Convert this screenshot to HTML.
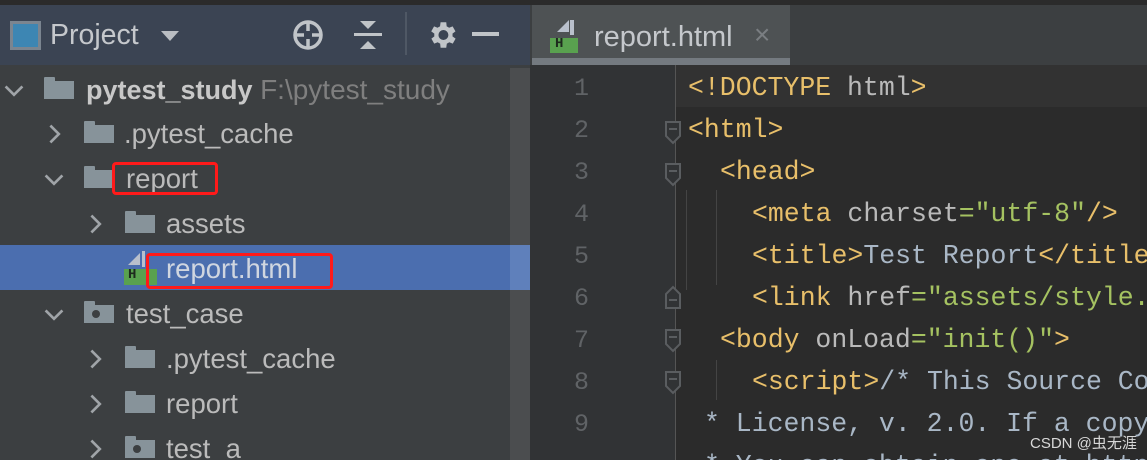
<!DOCTYPE html>
<html><head><style>
*{margin:0;padding:0;box-sizing:border-box}
html,body{width:1147px;height:460px;overflow:hidden}
body{background:#2b2b2b;position:relative;font-family:"Liberation Sans","Noto Sans CJK SC",sans-serif}
.a{position:absolute}
#top{left:0;top:0;width:1147px;height:5px;background:#2b2b2b}
#lhead{left:0;top:5px;width:530px;height:60px;background:#3b4453}
#tree{left:0;top:65px;width:530px;height:395px;background:#3c3f41}
#sb{left:510px;top:68px;width:20px;height:392px;background:#4b4d4f}
.t{position:absolute;font-size:27.5px;color:#bbbbbb;white-space:nowrap;line-height:30px}
.fold{position:absolute;width:30px;height:22px}
.fold:before{content:"";position:absolute;left:0;top:0;width:11px;height:5px;background:#87939a;border-radius:1px 1px 0 0}
.fold:after{content:"";position:absolute;left:0;top:4px;width:30px;height:18px;background:#87939a}
.dot{position:absolute;width:8px;height:8px;border-radius:50%;background:#3c3f41;z-index:2}
.ch{position:absolute}
#tabs{left:530px;top:5px;width:617px;height:60px;background:#3c3f41}
#tab{left:532px;top:5px;width:258px;height:53px;background:#4e5254}
#tabul{left:532px;top:58px;width:258px;height:7px;background:#747a80}
#gut{left:530px;top:65px;width:145px;height:395px;background:#313335}
#gl{left:675px;top:65px;width:1px;height:395px;background:#555}
#hl{left:676px;top:65px;width:471px;height:42px;background:#323232}
.ln{position:absolute;left:574px;font-family:"Liberation Mono",monospace;font-size:25px;color:#606366;line-height:30px}
.c{position:absolute;font-family:"Liberation Mono",monospace;font-size:26.5px;color:#a9b7c6;white-space:pre;line-height:30px}
.g{color:#e8bf6a}.s{color:#a5c261}.at{color:#bababa}
.fm{position:absolute;left:664px}
.red{position:absolute;border:3px solid #ff1a1a;border-radius:4px}
</style></head><body>
<svg width="0" height="0" style="position:absolute"><defs>
<symbol id="cr" viewBox="0 0 20 20"><path d="M7 3l7 7-7 7" fill="none" stroke="#a0a4a8" stroke-width="2.2"/></symbol>
<symbol id="cd" viewBox="0 0 20 20"><path d="M3 7l7 7 7-7" fill="none" stroke="#a0a4a8" stroke-width="2.2"/></symbol>
<symbol id="fd" viewBox="0 0 20 26"><path d="M2 2h14v14l-7 7-7-7z" fill="#313335" stroke="#5a5d60" stroke-width="2"/><path d="M5 9h8" stroke="#5a5d60" stroke-width="2"/></symbol>
<symbol id="fu" viewBox="0 0 20 26"><path d="M2 24h14V10L9 3 2 10z" fill="#313335" stroke="#5a5d60" stroke-width="2"/><path d="M5 16h8" stroke="#5a5d60" stroke-width="2"/></symbol>
</defs></svg>
<div class="a" id="top"></div>
<div class="a" id="lhead"></div>
<div class="a" style="left:10px;top:21px;width:31px;height:29px;border:3px solid #7b8590;background:#3d86b3"></div>
<div class="t" style="left:50px;top:20px;font-size:28.5px;color:#c5c8cc">Project</div>
<div class="a" style="left:161px;top:31px;width:0;height:0;border-left:9px solid transparent;border-right:9px solid transparent;border-top:10px solid #b9bdc2"></div>
<svg class="a" style="left:290px;top:17px" width="36" height="36" viewBox="0 0 36 36"><circle cx="18" cy="18" r="13" fill="none" stroke="#c0c4c8" stroke-width="3.5"/><path d="M18 5v9M18 22v9M5 18h9M22 18h9" stroke="#c0c4c8" stroke-width="3.5"/></svg>
<svg class="a" style="left:350px;top:17px" width="36" height="36" viewBox="0 0 36 36"><path d="M10 4h16l-8 8z M10 32h16l-8-8z" fill="#c0c4c8"/><rect x="4" y="16" width="28" height="3" fill="#c0c4c8"/></svg>
<div class="a" style="left:405px;top:12px;width:2px;height:43px;background:#4f5865"></div>
<svg class="a" style="left:425px;top:18px" width="34" height="34" viewBox="0 0 24 24"><path fill="#c0c4c8" d="M19.4 13a7.5 7.5 0 000-2l2.1-1.6-2-3.5-2.5 1a7 7 0 00-1.7-1L15 3h-4l-.4 2.9a7 7 0 00-1.7 1l-2.5-1-2 3.5L6.6 11a7.5 7.5 0 000 2l-2.1 1.6 2 3.5 2.5-1a7 7 0 001.7 1L11 21h4l.4-2.9a7 7 0 001.7-1l2.5 1 2-3.5zM13 15.5a3.5 3.5 0 110-7 3.5 3.5 0 010 7z"/></svg>
<div class="a" style="left:472px;top:32px;width:27px;height:4px;background:#c0c4c8"></div>
<div class="a" style="left:515px;top:5px;width:15px;height:60px;background:#3b4453"></div>

<div class="a" id="tree"></div>
<div class="a" style="left:0;top:245px;width:530px;height:45px;background:#4b6eaf"></div>
<div class="a" id="sb"></div>
<div class="a" style="left:510px;top:245px;width:20px;height:45px;background:#5f80bb"></div>

<svg class="ch" style="left:2px;top:78px" width="24" height="24"><use href="#cd"/></svg>
<div class="fold" style="left:44px;top:77px"></div>
<div class="t" style="left:86px;top:75px;font-weight:bold;color:#c8c8c8;font-size:27px">pytest_study <span style="font-weight:normal;color:#7f7f7f;font-size:28px">F:\pytest_study</span></div>

<svg class="ch" style="left:42px;top:122px" width="24" height="24"><use href="#cr"/></svg>
<div class="fold" style="left:84px;top:121px"></div>
<div class="t" style="left:124px;top:119px">.pytest_cache</div>

<svg class="ch" style="left:42px;top:167px" width="24" height="24"><use href="#cd"/></svg>
<div class="fold" style="left:84px;top:166px"></div>
<div class="t" style="left:126px;top:164px">report</div>
<div class="red" style="left:112px;top:162px;width:106px;height:33px"></div>

<svg class="ch" style="left:83px;top:212px" width="24" height="24"><use href="#cr"/></svg>
<div class="fold" style="left:125px;top:211px"></div>
<div class="t" style="left:166px;top:209px">assets</div>

<div class="a" style="left:128px;top:253px;width:12px;height:12px;background:#b9c0cc;clip-path:polygon(100% 0,100% 100%,0 100%)"></div>
<div class="a" style="left:142px;top:251px;width:3px;height:16px;background:#b9c0cc"></div>
<div class="a" style="left:124px;top:269px;width:33px;height:16px;background:#59a14f"></div>
<div class="a" style="left:128px;top:267px;font:bold 14px 'Liberation Mono',monospace;color:#1e2a1e">H</div>
<div class="t" style="left:166px;top:254px;color:#d0d6e0">report.html</div>
<div class="red" style="left:146px;top:253px;width:187px;height:36px"></div>

<svg class="ch" style="left:42px;top:302px" width="24" height="24"><use href="#cd"/></svg>
<div class="fold" style="left:84px;top:301px"></div><div class="dot" style="left:92px;top:310px"></div>
<div class="t" style="left:126px;top:299px">test_case</div>

<svg class="ch" style="left:83px;top:347px" width="24" height="24"><use href="#cr"/></svg>
<div class="fold" style="left:125px;top:346px"></div>
<div class="t" style="left:166px;top:344px">.pytest_cache</div>

<svg class="ch" style="left:83px;top:392px" width="24" height="24"><use href="#cr"/></svg>
<div class="fold" style="left:125px;top:391px"></div>
<div class="t" style="left:166px;top:389px">report</div>

<svg class="ch" style="left:83px;top:437px" width="24" height="24"><use href="#cr"/></svg>
<div class="fold" style="left:125px;top:436px"></div><div class="dot" style="left:133px;top:445px"></div>
<div class="t" style="left:166px;top:434px">test_a</div>

<div class="a" id="tabs"></div>
<div class="a" id="tab"></div>
<div class="a" id="tabul"></div>
<div class="a" style="left:557px;top:20px;width:12px;height:12px;background:#b9c0cc;clip-path:polygon(100% 0,100% 100%,0 100%)"></div>
<div class="a" style="left:570px;top:20px;width:4px;height:15px;background:#b9c0cc"></div>
<div class="a" style="left:550px;top:38px;width:28px;height:15px;background:#59a14f"></div>
<div class="a" style="left:555px;top:36px;font:bold 14px 'Liberation Mono',monospace;color:#1e2a1e">H</div>
<div class="t" style="left:594px;top:22px;color:#c5c8cc;font-size:29px">report.html</div>
<div class="t" style="left:754px;top:20px;color:#7a7e82;font-size:28px">×</div>

<div class="a" id="gut"></div>
<div class="a" id="hl"></div>
<div class="a" id="gl"></div>
<div class="ln" style="top:74px">1</div>
<div class="ln" style="top:116px">2</div>
<div class="ln" style="top:158px">3</div>
<div class="ln" style="top:200px">4</div>
<div class="ln" style="top:242px">5</div>
<div class="ln" style="top:284px">6</div>
<div class="ln" style="top:326px">7</div>
<div class="ln" style="top:368px">8</div>
<div class="ln" style="top:410px">9</div>
<svg class="fm" style="top:120px" width="20" height="26"><use href="#fd"/></svg>
<svg class="fm" style="top:162px" width="20" height="26"><use href="#fd"/></svg>
<svg class="fm" style="top:284px" width="20" height="26"><use href="#fu"/></svg>
<svg class="fm" style="top:328px" width="20" height="26"><use href="#fd"/></svg>
<svg class="fm" style="top:370px" width="20" height="26"><use href="#fd"/></svg>
<div class="a" style="left:686px;top:190px;width:1px;height:100px;background:#444"></div>
<div class="a" style="left:716px;top:190px;width:1px;height:95px;background:#444"></div>
<div class="a" style="left:716px;top:360px;width:1px;height:40px;background:#444"></div>

<div class="c" style="left:688px;top:73px"><span class="g">&lt;!DOCTYPE</span> <span class="at">html</span><span class="g">&gt;</span></div>
<div class="c" style="left:688px;top:115px"><span class="g">&lt;html&gt;</span></div>
<div class="c" style="left:720px;top:157px"><span class="g">&lt;head&gt;</span></div>
<div class="c" style="left:752px;top:199px"><span class="g">&lt;meta</span> <span class="at">charset</span><span class="s">="utf-8"</span><span class="g">/&gt;</span></div>
<div class="c" style="left:752px;top:241px"><span class="g">&lt;title&gt;</span>Test Report<span class="g">&lt;/title&gt;</span></div>
<div class="c" style="left:752px;top:283px"><span class="g">&lt;link</span> <span class="at">href</span><span class="s">="assets/style.css"</span></div>
<div class="c" style="left:720px;top:325px"><span class="g">&lt;body</span> <span class="at">onLoad</span><span class="s">="init()"</span><span class="g">&gt;</span></div>
<div class="c" style="left:752px;top:367px"><span class="g">&lt;script&gt;</span>/* This Source Code</div>
<div class="c" style="left:704px;top:409px">* License, v. 2.0. If a copy</div>
<div class="c" style="left:704px;top:451px">* You can obtain one at http</div>
<div class="a" style="left:1030px;top:432px;font-size:15px;color:#d8d8d8">CSDN @虫无涯</div>
</body></html>
